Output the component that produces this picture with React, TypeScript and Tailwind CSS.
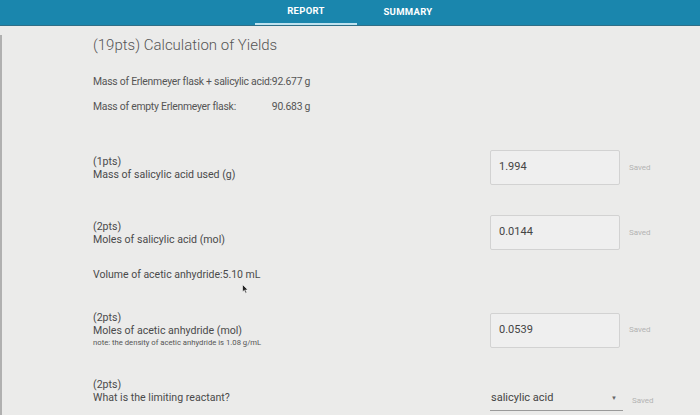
import React from 'react';

const font = { fontFamily: 'Roboto, "Liberation Sans", sans-serif' };

function Saved() {
  return <span className="ml-[9px] text-[8px] text-[#b3b3b3]">Saved</span>;
}

function NumberRow({ pts, label, value, note }: { pts: string; label: string; value: string; note?: string }) {
  return (
    <div className="flex items-center">
      <div className="w-[397px] text-[10.6px] leading-[13px] text-[#4a4a4a]">
        <div>({pts})</div>
        <div>{label}</div>
        {note && <div className="text-[7.7px] leading-[12px] text-[#555]">{note}</div>}
      </div>
      <div className="flex h-[35px] w-[130px] items-center rounded-[2px] border border-[#d2d2d2] bg-[#efefef] pl-[8px] text-[11px] text-[#444]">
        {value}
      </div>
      <Saved />
    </div>
  );
}

export default function App() {
  return (
    <div className="relative h-[415px] w-[700px] overflow-hidden bg-[#ebebea]" style={font}>
      <div className="flex h-[26px] justify-center border-b border-[#2f6f87] bg-[#1a86ad]">
        <div className="flex w-[102px] translate-x-[7px] items-center justify-center border-b-2 border-[#bfe2ef] text-[9.5px] font-bold tracking-[0.3px] text-white">
          REPORT
        </div>
        <div className="flex w-[102px] translate-x-[7px] items-center justify-center text-[9.5px] font-bold tracking-[0.3px] text-white">
          SUMMARY
        </div>
      </div>

      <div className="h-[389px] border-l-2 border-[#b0b0b0] pl-[91px]">
        <div className="mt-[9px] text-[15px] font-light leading-[20px] text-[#555]">(19pts) Calculation of Yields</div>

        <div className="mt-[19px] grid w-fit grid-cols-[auto_auto] gap-y-[9px] text-[10.4px] leading-[16px] tracking-[-0.25px] text-[#555]">
          <div>Mass of Erlenmeyer flask + salicylic acid:</div>
          <div className="text-right">92.677 g</div>
          <div>Mass of empty Erlenmeyer flask:</div>
          <div className="text-right">90.683 g</div>
        </div>

        <div className="mt-[35px]">
          <NumberRow pts="1pts" label="Mass of salicylic acid used (g)" value="1.994" />
        </div>
        <div className="mt-[30px]">
          <NumberRow pts="2pts" label="Moles of salicylic acid (mol)" value="0.0144" />
        </div>

        <div className="mt-[17px] text-[10.5px] leading-[16px] text-[#4a4a4a]">Volume of acetic anhydride:5.10 mL</div>

        <div className="mt-[28px]">
          <NumberRow
            pts="2pts"
            label="Moles of acetic anhydride (mol)"
            value="0.0539"
            note="note: the density of acetic anhydride is 1.08 g/mL"
          />
        </div>

        <div className="mt-[29px] flex items-start">
          <div className="w-[397px] text-[10.6px] leading-[13px] text-[#4a4a4a]">
            <div>(2pts)</div>
            <div>What is the limiting reactant?</div>
          </div>
          <div className="mt-[13px] flex items-start">
            <div className="flex w-[133px] items-center justify-between border-b border-[#9a9a9a] pb-[5px] pl-[1px] pr-[6px] text-[11px] leading-[14px] text-[#444]">
              <span>salicylic acid</span>
              <span className="text-[6px] text-[#666]">▼</span>
            </div>
            <div className="leading-[14px]">
              <Saved />
            </div>
          </div>
        </div>
      </div>

      <svg className="absolute left-[242px] top-[284px]" width="7" height="10" viewBox="0 0 7 10">
        <path d="M0.5 0.5 L0.5 8 L2.3 6.3 L3.6 9.3 L4.8 8.8 L3.6 5.9 L6 5.9 Z" fill="#222" stroke="#fff" strokeWidth="0.6" />
      </svg>
    </div>
  );
}
